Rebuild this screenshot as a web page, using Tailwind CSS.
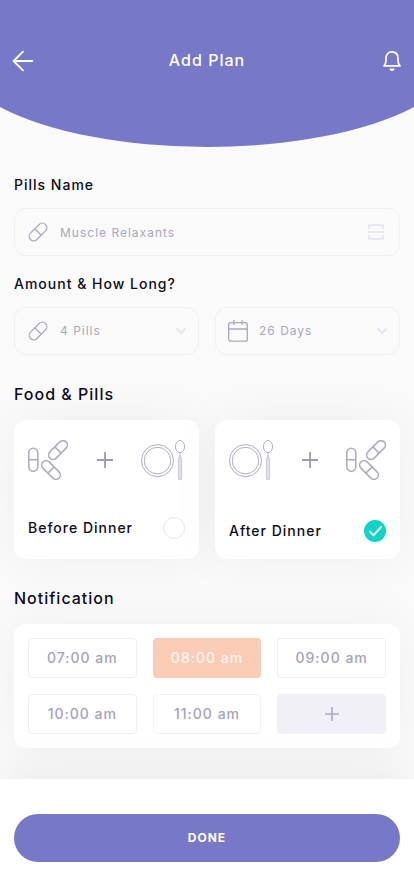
<!DOCTYPE html>
<html lang="en">
<head>
<meta charset="utf-8">
<meta name="viewport" content="width=device-width, initial-scale=1">
<title>Add Plan</title>
<script src="https://cdn.jsdelivr.net/npm/@tailwindcss/browser@4"></script>
</head>
<body class="flex min-h-screen flex-col bg-[#fafafb] font-['Inter',sans-serif] tracking-[1px] text-[#0d0c20]">
<svg class="hidden" aria-hidden="true">
  <symbol id="pill" viewBox="0 0 20 20">
    <g fill="none" stroke="currentColor" stroke-width="1.3" transform="rotate(45 10 10)"><rect x="5.5" y="-0.6" width="9" height="21.2" rx="4.5"/><path d="M5.500 10h9"/></g>
  </symbol>
  <symbol id="chevron" viewBox="0 0 10 6">
    <path d="M1 1l4 4 4-4" fill="none" stroke="currentColor" stroke-width="1.9" stroke-linecap="round" stroke-linejoin="round"/>
  </symbol>
  <symbol id="plus" viewBox="0 0 16 16">
    <path d="M8 0v16M0 8h16" fill="none" stroke="currentColor" stroke-width="1.8"/>
  </symbol>
  <symbol id="pills" viewBox="0 0 40 40">
    <g fill="none" stroke="currentColor" stroke-width="1.6">
      <g><rect x="0.8" y="8.2" width="9" height="23" rx="4.5"/><path d="M.8 19.700h9"/></g>
      <g transform="rotate(45 30 10)"><rect x="25.600" y="-1.400" width="8.800" height="22.800" rx="4.400"/><path d="M25.600 10h8.800"/></g>
      <g transform="rotate(-45 23 30)"><rect x="18.600" y="18.600" width="8.800" height="22.800" rx="4.400"/><path d="M18.600 30h8.800"/></g>
    </g>
  </symbol>
  <symbol id="plate" viewBox="0 0 44 40">
    <g fill="none" stroke="currentColor" stroke-width="1">
      <circle cx="16.5" cy="20.600" r="16"/><circle cx="16.5" cy="20.600" r="13.300"/>
      <ellipse cx="39" cy="6.600" rx="4.600" ry="6.100"/>
      <path d="M38.400 12.800v4.600M39.600 12.800v4.600" stroke-width=".6"/>
      <rect x="37.300" y="17.600" width="3.400" height="22" rx=".6" fill="#dedced" stroke-width=".5"/>
    </g>
  </symbol>
</svg>

<header class="relative h-[147px] text-white">
  <svg class="absolute inset-0 h-full w-full" viewBox="0 0 414 147" preserveAspectRatio="none" aria-hidden="true"><path d="M0 0H414V107A252 93 0 0 1 0 107Z" fill="#7878c9"/></svg>
  <div class="relative flex items-start justify-between px-3 pt-12">
    <button type="button" aria-label="Back" class="flex h-[26px] w-5 items-center">
      <svg class="h-[22px] w-[22px] shrink-0" viewBox="0 0 22 22" fill="none" stroke="currentColor" stroke-width="1.8" stroke-linecap="round" stroke-linejoin="round"><path d="M20.300 11H1.600M11 1.600L1.600 11l9.400 9.400"/></svg>
    </button>
    <h1 class="text-base leading-6 font-medium">Add Plan</h1>
    <button type="button" aria-label="Notifications" class="flex h-[26px] w-5 items-center">
      <svg class="h-[22px] w-5" viewBox="0 0 20 22" fill="none" stroke="currentColor" stroke-linecap="round"><path d="M2 15.900h16c-1.300-1.300-2-3.200-2-5.700V8.500C16 4.500 13.800 1.900 10 1.900S4 4.500 4 8.500v1.700c0 2.500-.7 4.400-2 5.700z" stroke-width="1.7" stroke-linejoin="round"/><path d="M8.600 19.300q1.400 1.300 2.800 0" stroke-width="2"/></svg>
    </button>
  </div>
</header>

<main class="px-3.5 pt-7 pb-[31px]">
  <label for="name" class="block text-sm leading-5 font-medium">Pills Name</label>
  <div class="relative mt-[13px] text-[#a9a7bf]">
    <svg class="absolute top-[14px] left-[14px] h-5 w-5" aria-hidden="true"><use href="#pill"/></svg>
    <input id="name" type="text" value="Muscle Relaxants" class="h-12 w-full rounded-xl border border-[#efeef6] bg-transparent pr-12 pl-[45px] text-xs tracking-[1px] outline-none">
    <button type="button" aria-label="Scan" class="absolute top-4 right-4 text-[#e4e3ee]">
      <svg class="h-4 w-4" viewBox="0 0 16 16" fill="none" stroke="currentColor" stroke-width="1.7"><path d="M1 5V1.200h14V5M0 8h16M1 11v3.800h14V11"/></svg>
    </button>
  </div>

  <h2 class="mt-[18px] text-sm leading-5 font-medium">Amount &amp; How Long?</h2>
  <div class="mt-[13px] grid grid-cols-2 gap-4 text-[#a9a7bf]">
    <div class="relative">
      <svg class="absolute top-[14px] left-[14px] h-5 w-5" aria-hidden="true"><use href="#pill"/></svg>
      <select aria-label="Amount" class="h-12 w-full appearance-none rounded-xl border border-[#efeef6] bg-transparent pr-8 pb-px pl-[45px] text-xs tracking-[1px] outline-none"><option>4 Pills</option></select>
      <svg class="pointer-events-none absolute top-[21px] right-[13px] h-[6px] w-[10px] text-[#e4e3ee]" aria-hidden="true"><use href="#chevron"/></svg>
    </div>
    <div class="relative">
      <svg class="absolute top-[13px] left-[13px] h-[22px] w-5" viewBox="0 0 20 22" fill="none" stroke="currentColor" stroke-width="1.300" aria-hidden="true"><rect x=".7" y="2.600" width="18.600" height="18.600" rx="2.200"/><path d="M.6 9h18.800M6 0v5M14 0v5"/></svg>
      <select aria-label="How long" class="h-12 w-full appearance-none rounded-xl border border-[#efeef6] bg-transparent pr-8 pl-[43px] text-xs tracking-[1px] outline-none"><option>26 Days</option></select>
      <svg class="pointer-events-none absolute top-[21px] right-[13px] h-[6px] w-[10px] text-[#e4e3ee]" aria-hidden="true"><use href="#chevron"/></svg>
    </div>
  </div>

  <h2 class="mt-[27px] text-base leading-6 font-medium">Food &amp; Pills</h2>
  <div class="mt-3.5 grid grid-cols-2 gap-4">
    <label class="rounded-xl bg-white px-3.5 py-5 shadow-[0_0_50px_rgba(0,0,0,0.05)]">
      <span class="flex items-center justify-between text-[#aeacc6]">
        <svg class="h-10 w-10" aria-hidden="true"><use href="#pills"/></svg>
        <svg class="h-4 w-4 text-[#9c9ab4]" aria-hidden="true"><use href="#plus"/></svg>
        <svg class="h-10 w-11" aria-hidden="true"><use href="#plate"/></svg>
      </span>
      <span class="mt-[37px] flex items-center justify-between text-sm font-medium">Before Dinner
        <input type="radio" name="meal" class="h-[22px] w-[22px] appearance-none rounded-full border border-[#e6e5ee]">
      </span>
    </label>
    <label class="rounded-xl bg-white px-3.5 pt-5 pb-[17px] shadow-[0_0_50px_rgba(0,0,0,0.05)]">
      <span class="flex items-center justify-between text-[#aeacc6]">
        <svg class="h-10 w-11" aria-hidden="true"><use href="#plate"/></svg>
        <svg class="h-4 w-4 text-[#9c9ab4]" aria-hidden="true"><use href="#plus"/></svg>
        <svg class="h-10 w-10" aria-hidden="true"><use href="#pills"/></svg>
      </span>
      <span class="mt-10 flex items-center justify-between text-sm font-medium">After Dinner
        <span class="relative flex">
          <input type="radio" name="meal" checked class="h-[22px] w-[22px] appearance-none rounded-full bg-[#12d3c7]">
          <svg class="pointer-events-none absolute inset-0 h-[22px] w-[22px]" viewBox="0 0 22 22" fill="none" stroke="#fff" stroke-width="1.900" stroke-linecap="round" stroke-linejoin="round" aria-hidden="true"><path d="M5.800 11.600l3.700 3.800 7.700-8.600"/></svg>
        </span>
      </span>
    </label>
  </div>

  <h2 class="mt-[27px] text-base leading-6 font-medium">Notification</h2>
  <div class="mt-3.5 grid grid-cols-3 gap-4 rounded-xl bg-white p-3.5 text-sm font-medium text-[#a5a3bb] shadow-[0_0_50px_rgba(0,0,0,0.05)]">
    <button type="button" class="h-10 rounded border border-[#efeef3] tracking-[1px]">07:00 am</button>
    <button type="button" aria-pressed="true" class="h-10 rounded bg-[#faccb5] tracking-[1px] text-[#fff6f0]">08:00 am</button>
    <button type="button" class="h-10 rounded border border-[#efeef3] tracking-[1px]">09:00 am</button>
    <button type="button" class="h-10 rounded border border-[#efeef3] tracking-[1px]">10:00 am</button>
    <button type="button" class="h-10 rounded border border-[#f3f2f7] tracking-[1px]">11:00 am</button>
    <button type="button" aria-label="Add time" class="flex h-10 items-center justify-center rounded bg-[#f1f0f6]">
      <svg class="h-3.5 w-3.5 text-[#aaa8c4]" aria-hidden="true"><use href="#plus"/></svg>
    </button>
  </div>
</main>

<footer class="flex-1 bg-white px-3.5 pt-[35px] pb-[34px] shadow-[0_0_50px_rgba(0,0,0,0.08)]">
  <button type="button" class="h-12 w-full rounded-full bg-[#7878c9] text-xs font-bold tracking-[1px] text-white">DONE</button>
</footer>
</body>
</html>
